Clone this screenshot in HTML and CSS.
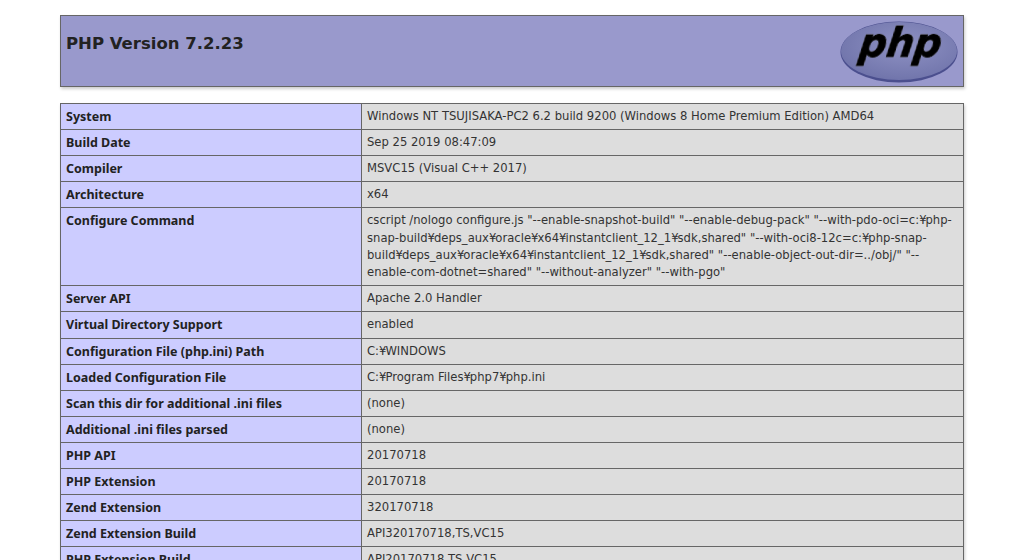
FILE: index.html
```html
<!DOCTYPE html>
<html lang="en">
<head>
<meta charset="utf-8">
<title>phpinfo()</title>
<link rel="stylesheet" href="styles.css">
</head>
<body>
<div class="center">
  <header class="banner">
    <h1 class="title">PHP Version 7.2.23</h1>
    <svg class="logo" width="118" height="62" viewBox="0 0 118 62" aria-label="PHP logo">
      <defs>
        <radialGradient id="oval" cx="0.55" cy="0.4" r="0.75">
          <stop offset="0" stop-color="#8f92c4"/>
          <stop offset="0.75" stop-color="#7377ad"/>
          <stop offset="1" stop-color="#666aa6"/>
        </radialGradient>
      </defs>
      <ellipse cx="59" cy="31" rx="58.5" ry="30.5" fill="#4b4f8e"/>
      <ellipse cx="59" cy="30" rx="58" ry="29" fill="url(#oval)"/>
      <text class="logo-word" x="14" y="36" textLength="82" lengthAdjust="spacingAndGlyphs" transform="skewX(-8) translate(9 0)">php</text>
    </svg>
  </header>
  <table class="info">
    <tr><td class="e">System</td><td class="v">Windows NT TSUJISAKA-PC2 6.2 build 9200 (Windows 8 Home Premium Edition) AMD64</td></tr>
    <tr><td class="e">Build Date</td><td class="v">Sep 25 2019 08:47:09</td></tr>
    <tr><td class="e">Compiler</td><td class="v">MSVC15 (Visual C++ 2017)</td></tr>
    <tr><td class="e">Architecture</td><td class="v">x64</td></tr>
    <tr><td class="e">Configure Command</td><td class="v multi">cscript /nologo configure.js "--enable-snapshot-build" "--enable-debug-pack" "--with-pdo-oci=c:<span class="yen">¥</span>php-<br>snap-build<span class="yen">¥</span>deps_aux<span class="yen">¥</span>oracle<span class="yen">¥</span>x64<span class="yen">¥</span>instantclient_12_1<span class="yen">¥</span>sdk,shared" "--with-oci8-12c=c:<span class="yen">¥</span>php-snap-<br>build<span class="yen">¥</span>deps_aux<span class="yen">¥</span>oracle<span class="yen">¥</span>x64<span class="yen">¥</span>instantclient_12_1<span class="yen">¥</span>sdk,shared" "--enable-object-out-dir=../obj/" "--<br>enable-com-dotnet=shared" "--without-analyzer" "--with-pgo"</td></tr>
    <tr><td class="e">Server API</td><td class="v">Apache 2.0 Handler</td></tr>
    <tr><td class="e">Virtual Directory Support</td><td class="v">enabled</td></tr>
    <tr><td class="e">Configuration File (php.ini) Path</td><td class="v">C:<span class="yen">¥</span>WINDOWS</td></tr>
    <tr><td class="e">Loaded Configuration File</td><td class="v">C:<span class="yen">¥</span>Program Files<span class="yen">¥</span>php7<span class="yen">¥</span>php.ini</td></tr>
    <tr><td class="e">Scan this dir for additional .ini files</td><td class="v">(none)</td></tr>
    <tr><td class="e">Additional .ini files parsed</td><td class="v">(none)</td></tr>
    <tr><td class="e">PHP API</td><td class="v">20170718</td></tr>
    <tr><td class="e">PHP Extension</td><td class="v">20170718</td></tr>
    <tr><td class="e">Zend Extension</td><td class="v">320170718</td></tr>
    <tr><td class="e">Zend Extension Build</td><td class="v">API320170718,TS,VC15</td></tr>
    <tr><td class="e">PHP Extension Build</td><td class="v">API20170718,TS,VC15</td></tr>
  </table>
</div>
</body>
</html>
```
FILE: styles.css
```css
html, body {
  height: 560px;
  overflow: hidden;
}
body {
  margin: 0;
  background: #fff;
  color: #222;
  font-family: "DejaVu Sans", Verdana, sans-serif;
  font-size: 11.6px;
}
.center {
  width: 904px;
  margin: 15px 0 0 60px;
}
.banner {
  box-sizing: border-box;
  height: 72px;
  display: flex;
  justify-content: space-between;
  padding: 5px 5px 0;
  background: #9999cc;
  border: 1px solid #666;
  box-shadow: 1px 2px 3px #ccc;
}
.title {
  margin: 13px 0 0;
  font-size: 16.5px;
  font-weight: bold;
  line-height: 20px;
  color: #222;
}
.logo {
  display: block;
}
.logo-word {
  font-family: "DejaVu Sans", sans-serif;
  font-size: 40px;
  font-weight: bold;
  font-style: italic;
  fill: #000;
  stroke: #000;
  stroke-width: 1px;
  filter: drop-shadow(0.8px 0.8px 0 #d4d4ee);
}
.info {
  width: 904px;
  margin-top: 16px;
  table-layout: fixed;
  border-collapse: collapse;
  box-shadow: 1px 2px 3px #ccc;
}
.info td {
  border: 1px solid #666;
  padding: 4px 5px;
  line-height: 17.1px;
  vertical-align: top;
}
.info .multi {
  line-height: 17.25px;
}
.yen {
  letter-spacing: -1px;
}
.e {
  width: 290px;
  background: #ccccff;
  font-family: "Noto Sans", "DejaVu Sans", sans-serif;
  font-size: 12.5px;
  font-weight: bold;
  color: #222;
}
.v {
  background: #dddddd;
  color: #333;
}
```
